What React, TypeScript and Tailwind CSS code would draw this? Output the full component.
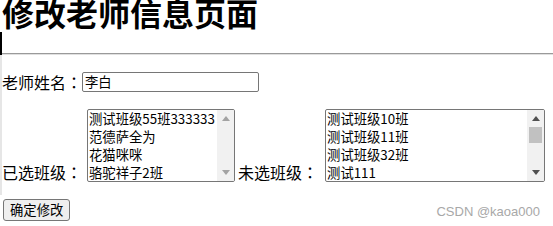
import React from "react";

const cjk = { fontFamily: '"Noto Sans CJK SC", "Noto Sans", sans-serif' };
const colonFont = { fontFamily: '"Noto Sans CJK TC", "Noto Sans CJK SC", sans-serif' };

function Colon() {
  return <span style={colonFont}>：</span>;
}

function ScrollBar({ active }: { active: boolean }) {
  const arrow = active ? "#505050" : "#a3a3a3";
  return (
    <div className="flex w-[17px] shrink-0 flex-col bg-[#f1f1f1]">
      <div className="flex h-[17px] items-center justify-center">
        <svg width="8" height="5" viewBox="0 0 8 5">
          <polygon points="0,5 8,5 4,0" fill={arrow} />
        </svg>
      </div>
      <div className="flex flex-1 justify-center">
        {active && <div className="h-[16px] w-[13px] bg-[#c1c1c1]" />}
      </div>
      <div className="flex h-[17px] items-center justify-center">
        <svg width="8" height="5" viewBox="0 0 8 5">
          <polygon points="0,0 8,0 4,5" fill={arrow} />
        </svg>
      </div>
    </div>
  );
}

function ListBox({
  items,
  width,
  active,
}: {
  items: string[];
  width: string;
  active: boolean;
}) {
  return (
    <div
      className={`flex h-[73px] ${width} shrink-0 overflow-hidden rounded-[2px] border border-[#767676] bg-white`}
    >
      <div className="flex flex-1 flex-col overflow-hidden pl-[1px] text-[13.33px] leading-[18px] text-black">
        {items.map((it) => (
          <div key={it} className="h-[18px] shrink-0 whitespace-nowrap">
            {it}
          </div>
        ))}
      </div>
      <ScrollBar active={active} />
    </div>
  );
}

export default function App() {
  return (
    <div className="relative h-[226px] w-[553px] overflow-hidden bg-white text-black" style={cjk}>
      <div className="flex">
        <div className="flex w-[2px] shrink-0 flex-col">
          <div className="h-[32px]" />
          <div className="h-[23px] bg-black" />
          <div className="h-[140px] bg-[#e6e6e6]" />
        </div>
        <div className="flex flex-1 flex-col">
          <h1 className="mt-[-4px] text-[32px] font-bold leading-[32px]">修改老师信息页面</h1>
          <div className="mt-[25px] h-[1px] bg-[#9a9a9a]" />
          <div className="h-[1px] bg-[#e0e0e0]" />

          <div className="mt-[17px] flex h-[20px] items-center">
            <span className="text-[16px] leading-[20px]">
              老师姓名<Colon />
            </span>
            <div className="flex h-[20px] w-[177px] items-center rounded-[2px] border border-[#767676] pl-[2px] text-[13.33px]">
              李白
            </div>
          </div>

          <div className="mt-[17px] flex items-end">
            <span className="text-[16px] leading-[20px]">
              已选班级<Colon />
            </span>
            <div className="ml-[5px]">
              <ListBox
                width="w-[148px]"
                active={false}
                items={["测试班级55班333333", "范德萨全为", "花猫咪咪", "骆驼祥子2班"]}
              />
            </div>
            <span className="ml-[3px] text-[16px] leading-[20px]">
              未选班级<Colon />
            </span>
            <div className="ml-[7px]">
              <ListBox
                width="w-[220px]"
                active={true}
                items={["测试班级10班", "测试班级11班", "测试班级32班", "测试111", "测试222"]}
              />
            </div>
          </div>

          <div className="mt-[17px] flex">
            <button className="ml-[1px] h-[22px] rounded-[3px] border border-[#767676] bg-[#efefef] px-[6px] text-[13.33px] leading-[18px]">
              确定修改
            </button>
          </div>
        </div>
      </div>
      <div
        className="absolute right-[13px] top-[204px] text-[13px] leading-[16px] text-[#a8a8a8]"
        style={{ fontFamily: '"Liberation Sans", Arial, sans-serif' }}
      >
        CSDN @kaoa000
      </div>
    </div>
  );
}
